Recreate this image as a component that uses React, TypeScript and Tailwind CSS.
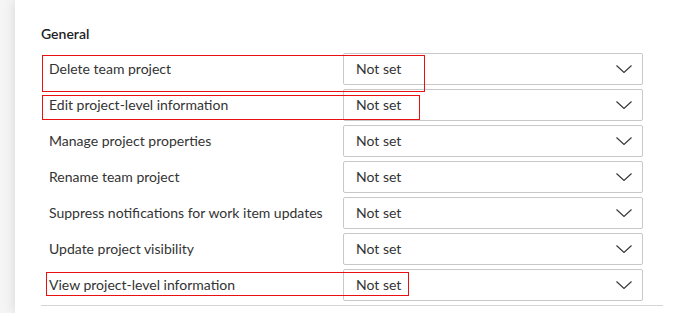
const permissions = [
    'Delete team project',
    'Edit project-level information',
    'Manage project properties',
    'Rename team project',
    'Suppress notifications for work item updates',
    'Update project visibility',
    'View project-level information',
];

// red callouts drawn on top of the screenshot, offsets relative to the section
const highlights = [
    'left-[1px] top-[31px] w-[383px] h-[37px]',
    'left-[1px] top-[71px] w-[378px] h-[25px]',
    'left-[5px] top-[248px] w-[363px] h-[24px]',
];

function Chevron() {
    return (
        <svg width="16" height="8" viewBox="0 0 16 8" fill="none" aria-hidden>
            <path d="M0.5 0.5 L8 7.5 L15.5 0.5" stroke="#333" strokeWidth="1.1" />
        </svg>
    );
}

function PermissionRow({ label }: { label: string }) {
    return (
        <div className="flex items-center h-8">
            <div className="w-[302px] pl-2 text-[#333]">{label}</div>
            <div className="w-[300px] h-8 flex items-center justify-between border border-[#c8c8c8] rounded-[2px] pl-3 pr-[10px] text-[#333]">
                <span>Not set</span>
                <Chevron />
            </div>
        </div>
    );
}

export default function App() {
    return (
        <div
            className="w-[680px] h-[313px] overflow-hidden bg-[#f5f5f5] flex"
            style={{ fontFamily: 'Lato, "Liberation Sans", sans-serif' }}
        >
            <div className="ml-[15px] w-[700px] shrink-0 bg-white shadow-[0_0_12px_rgba(0,0,0,0.13)] pl-[26px] pt-6">
                <div className="relative w-[622px] text-sm">
                    <h3 className="font-semibold leading-5 text-[#222] mb-[9px]">General</h3>
                    <div className="flex flex-col gap-1">
                        {permissions.map((p) => (
                            <PermissionRow key={p} label={p} />
                        ))}
                    </div>
                    <div className="mt-1 border-t border-[#d4d4d4]" />
                    {highlights.map((h) => (
                        <div key={h} className={`absolute border border-[#e81010] ${h}`} />
                    ))}
                </div>
            </div>
        </div>
    );
}
